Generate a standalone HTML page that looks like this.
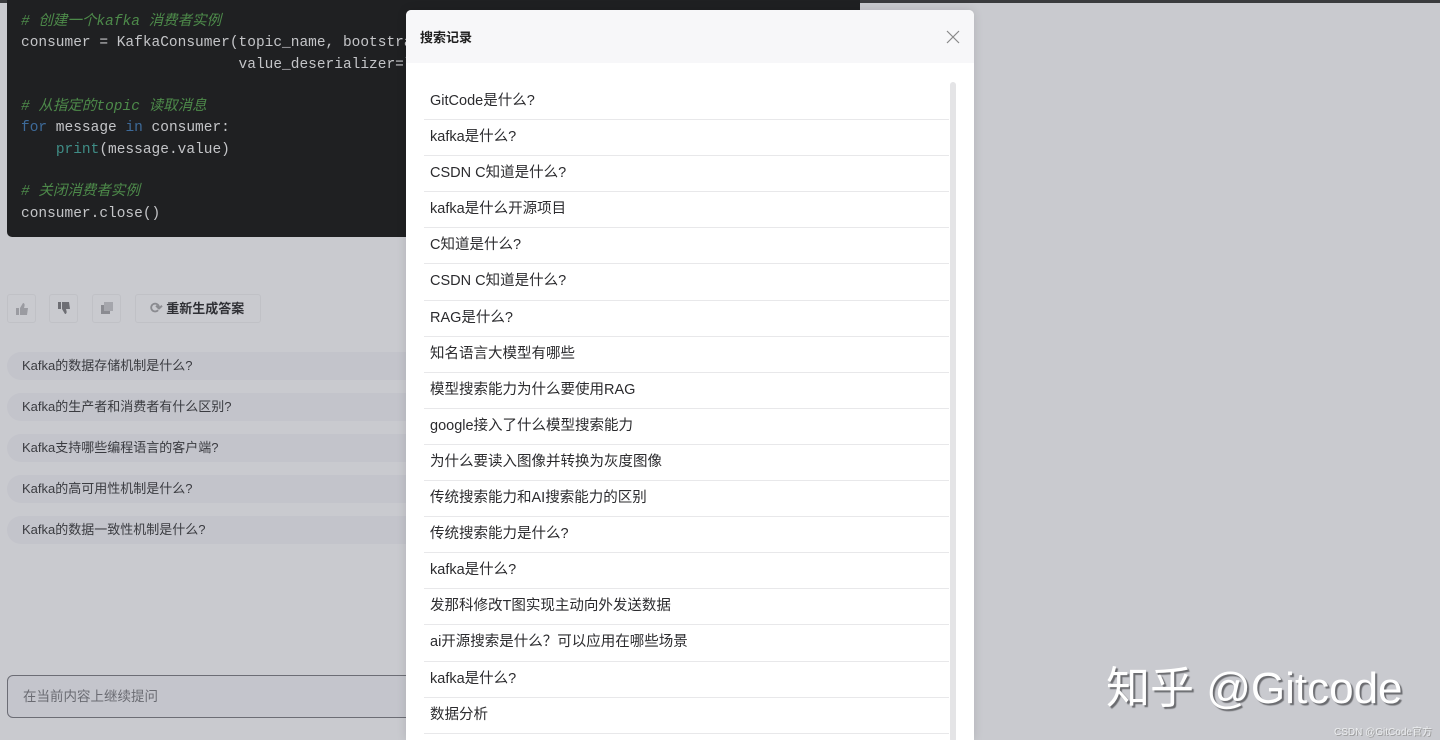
<!DOCTYPE html>
<html><head><meta charset="utf-8"><style>
*{margin:0;padding:0;box-sizing:border-box}
html,body{width:1440px;height:740px;overflow:hidden}
body{background:#c9cacf;font-family:"Liberation Sans","Noto Sans CJK SC",sans-serif;position:relative}
.topbar{position:absolute;left:0;top:0;width:1440px;height:3px;background:#3a3b3e}
.code{position:absolute;left:7px;top:0;width:853px;height:237px;background:#1f2022;border-radius:0 0 5px 5px;padding:12px 14px;font-family:"Liberation Mono","DejaVu Sans Mono","Noto Sans CJK SC",monospace;font-size:14.5px;line-height:21.3px;color:#c4c5c8;white-space:pre}
.cm{color:#4d8a4a;font-style:italic}
.kw{color:#3d6a99}
.fn{color:#3f8d86}
.btn{position:absolute;top:294px;height:29px;border:1px solid #c0c1c6;border-radius:3px;background:#c9cacf}
.pill{position:absolute;left:7px;width:420px;height:28px;background:#c3c4cb;border-radius:14px;font-size:13px;color:#3a3b40;padding-left:15px;line-height:28px}
.input{position:absolute;left:7px;top:675px;width:420px;height:43px;border:1px solid #6c6d75;border-radius:6px;background:#c4c5cc;font-size:13.5px;color:#6a6b72;padding-left:15px;line-height:41px}
.modal{position:absolute;left:406px;top:10px;width:568px;height:730px;background:#fff;border-radius:5px 5px 0 0;box-shadow:0 0 10px rgba(0,0,0,.12);overflow:hidden}
.mh{height:53px;background:#f7f7f9;border-radius:5px 5px 0 0;padding-left:14px;line-height:55px;font-size:13px;font-weight:bold;color:#222}
.close{position:absolute;left:540px;top:20px}
.list{position:absolute;left:18px;top:74px;width:525px}
.item{height:36.1px;border-bottom:1px solid #e8e8ea;padding-left:6px;line-height:35px;font-size:14.5px;color:#2b2b2e}
.sb{position:absolute;left:544px;top:72px;width:6px;height:660px;background:#e4e4e6;border-radius:3px}
.wm{position:absolute;left:1106px;top:652px;font-size:44px;color:#fff;text-shadow:2px 2px 1px #6b6c70}
.csdn{position:absolute;left:1334px;top:723px;font-size:10px;color:#eceef0;text-shadow:1px 1px 0 #999}
</style></head><body>
<div class="topbar"></div>
<div class="code"><span class="cm"># 创建一个kafka 消费者实例</span>
consumer = KafkaConsumer(topic_name, bootstrap_servers=bootstrap_servers,
                         value_deserializer=lambda x: x)

<span class="cm"># 从指定的topic 读取消息</span>
<span class="kw">for</span> message <span class="kw">in</span> consumer:
    <span class="fn">print</span>(message.value)

<span class="cm"># 关闭消费者实例</span>
consumer.close()</div>
<div class="btn" style="left:7px;width:29px"><svg width="27" height="27" viewBox="0 0 27 27"><path d="M8 13h3v7H8zM12 13l3-5c1 0 2 1 1.5 3L16 13h4l-1 7h-7z" fill="#9a9ba1"/></svg></div>
<div class="btn" style="left:49px;width:29px"><svg width="27" height="27" viewBox="0 0 27 27"><path d="M8 7h3v7H8zM12 14l3 5c1 0 2-1 1.5-3L16 14h4l-1-7h-7z" fill="#6d6e74"/></svg></div>
<div class="btn" style="left:92px;width:29px"><svg width="27" height="27" viewBox="0 0 27 27"><rect x="8" y="10" width="9" height="9" fill="#8a8b91"/><rect x="11" y="7" width="9" height="9" fill="#a5a6ac"/></svg></div>
<div class="btn" style="left:135px;width:126px;font-size:13px;font-weight:bold;color:#2f3035;line-height:27px;padding-left:14px"><span style="color:#8a8b90;font-size:15px">⟳</span>&nbsp;重新生成答案</div>
<div class="pill" style="top:352px">Kafka的数据存储机制是什么?</div>
<div class="pill" style="top:393px">Kafka的生产者和消费者有什么区别?</div>
<div class="pill" style="top:434px">Kafka支持哪些编程语言的客户端?</div>
<div class="pill" style="top:475px">Kafka的高可用性机制是什么?</div>
<div class="pill" style="top:516px">Kafka的数据一致性机制是什么?</div>
<div class="input">在当前内容上继续提问</div>
<div class="modal">
<div class="mh">搜索记录</div>
<svg class="close" width="14" height="14" viewBox="0 0 14 14"><path d="M1 1L13 13M13 1L1 13" stroke="#888" stroke-width="1.2"/></svg>
<div class="list">
<div class="item">GitCode是什么?</div>
<div class="item">kafka是什么?</div>
<div class="item">CSDN C知道是什么?</div>
<div class="item">kafka是什么开源项目</div>
<div class="item">C知道是什么?</div>
<div class="item">CSDN C知道是什么?</div>
<div class="item">RAG是什么?</div>
<div class="item">知名语言大模型有哪些</div>
<div class="item">模型搜索能力为什么要使用RAG</div>
<div class="item">google接入了什么模型搜索能力</div>
<div class="item">为什么要读入图像并转换为灰度图像</div>
<div class="item">传统搜索能力和AI搜索能力的区别</div>
<div class="item">传统搜索能力是什么?</div>
<div class="item">kafka是什么?</div>
<div class="item">发那科修改T图实现主动向外发送数据</div>
<div class="item">ai开源搜索是什么？可以应用在哪些场景</div>
<div class="item">kafka是什么?</div>
<div class="item">数据分析</div>
</div>
<div class="sb"></div>
</div>
<div class="wm">知乎 @Gitcode</div>
<div class="csdn">CSDN @GitCode官方</div>
</body></html>
